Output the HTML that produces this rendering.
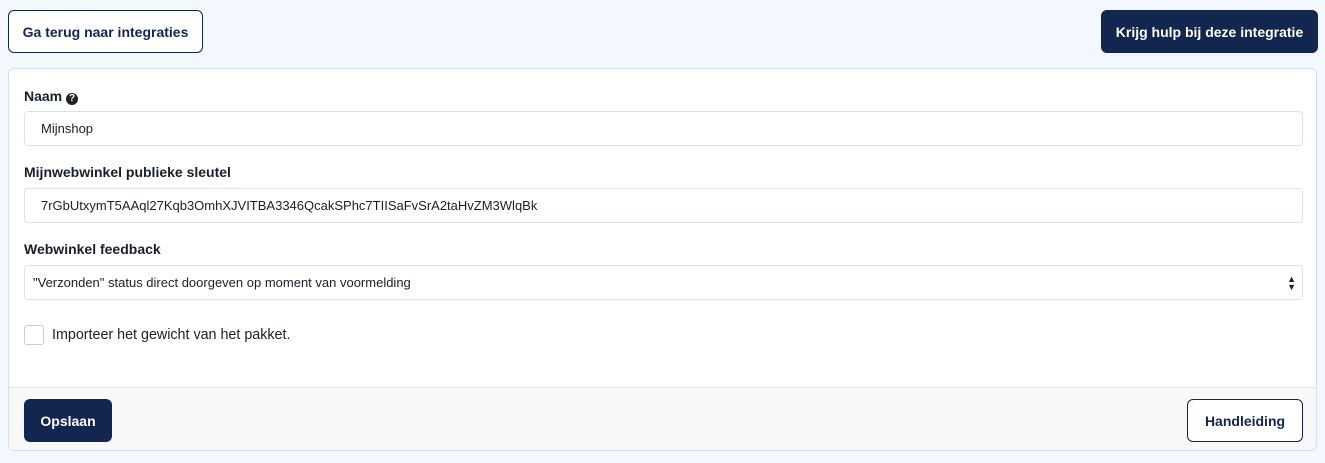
<!DOCTYPE html>
<html><head><style>
*{box-sizing:border-box;margin:0;padding:0}
body{width:1325px;height:463px;background:#f3f8fe;font-family:"Liberation Sans",sans-serif;color:#1a1f2b;position:relative;overflow:hidden}
.btn{position:absolute;border-radius:6px;font-weight:bold;font-size:14px;display:flex;align-items:center;justify-content:center}
.out{border:1px solid #13264f;color:#13264f;background:#fff}
.dark{background:#13264f;color:#fff}
.card{position:absolute;left:8px;top:68px;width:1309px;height:383px;background:#fff;border:1px solid #d5dfe9;border-radius:6px;overflow:hidden}
.lbl{position:absolute;left:15px;font-weight:bold;font-size:14px}
.inp{position:absolute;left:15px;width:1279px;height:35px;border:1px solid #dde3ea;border-radius:4px;font-size:13px;padding-left:16px;display:flex;align-items:center}
.foot{position:absolute;left:0;top:318px;width:100%;height:65px;background:#f8f8f8;border-top:1px solid #e6e6e6}
</style></head><body>
<div class="btn out" style="left:8px;top:10px;width:195px;height:43px">Ga terug naar integraties</div>
<div class="btn dark" style="left:1101px;top:10px;width:217px;height:43px">Krijg hulp bij deze integratie</div>
<div class="card">
<div class="lbl" style="top:19px">Naam <span style="display:inline-block;width:12px;height:12px;border-radius:50%;background:#222;color:#fff;font-size:10px;text-align:center;line-height:12px;vertical-align:0px">?</span></div>
<div class="inp" style="top:42px">Mijnshop</div>
<div class="lbl" style="top:95px">Mijnwebwinkel publieke sleutel</div>
<div class="inp" style="top:119px">7rGbUtxymT5AAql27Kqb3OmhXJVITBA3346QcakSPhc7TIISaFvSrA2taHvZM3WlqBk</div>
<div class="lbl" style="top:172px">Webwinkel feedback</div>
<div class="inp" style="top:196px;padding-left:8px">"Verzonden" status direct doorgeven op moment van voormelding<span style="position:absolute;right:6px;font-size:9px;line-height:8px">▲<br>▼</span></div>
<div style="position:absolute;left:15px;top:256px;width:20px;height:20px;border:1px solid #ccc;border-radius:3px"></div>
<div style="position:absolute;left:43px;top:258px;font-size:14.3px">Importeer het gewicht van het pakket.</div>
<div class="foot">
<div class="btn dark" style="left:15px;top:11px;width:88px;height:43px">Opslaan</div>
<div class="btn out" style="left:1178px;top:11px;width:116px;height:43px">Handleiding</div>
</div>
</div>
</body></html>
